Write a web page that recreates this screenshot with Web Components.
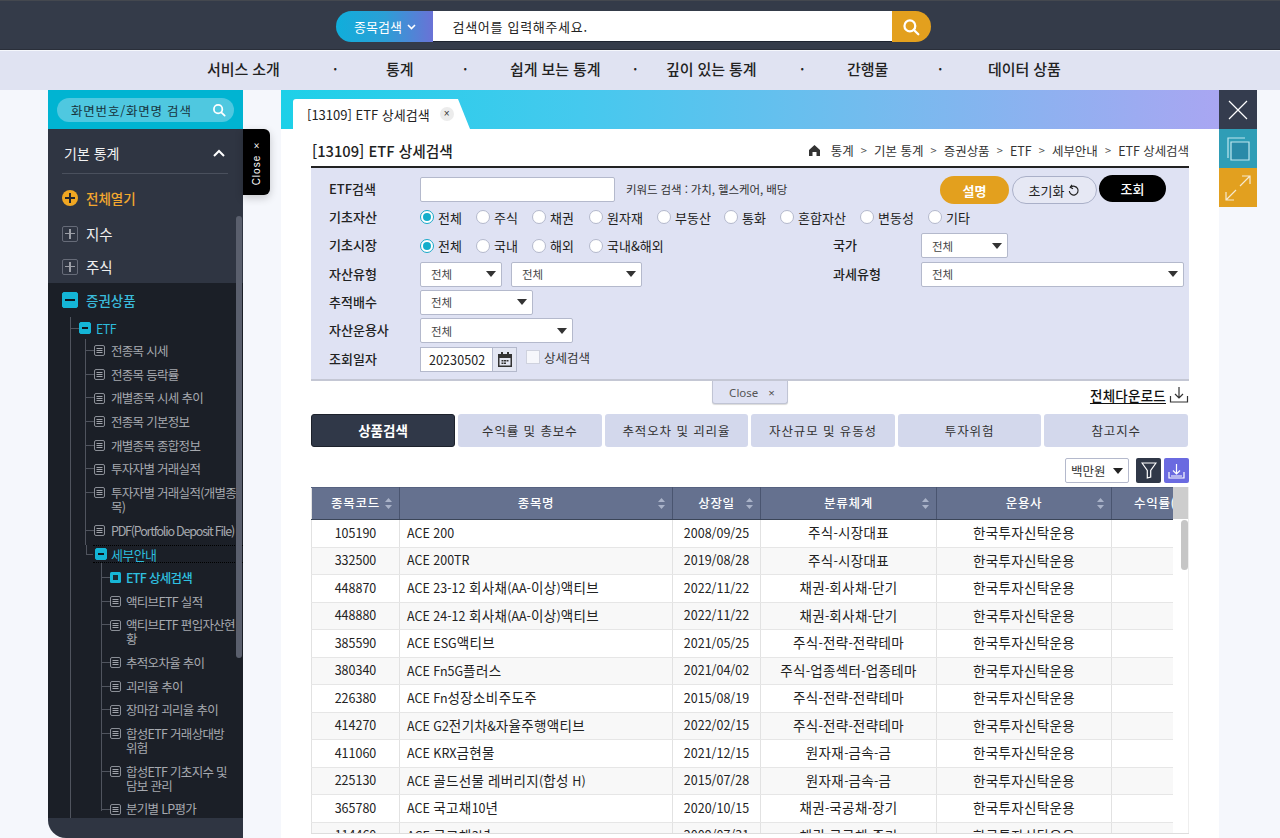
<!DOCTYPE html>
<html lang="ko"><head><meta charset="utf-8"><title>ETF 상세검색</title>
<style>
html,body{margin:0;padding:0;height:838px;overflow:hidden;background:#f5f7fc;font-family:"Noto Sans CJK KR","Noto Sans",sans-serif;font-size:13px;color:#222}
app-body{display:flex;height:748px}
</style></head><body>
<app-topbar></app-topbar>
<app-gnb></app-gnb>
<app-body>
  <app-sidebar></app-sidebar>
  <app-content>
    <tab-strip></tab-strip>
    <page-head></page-head>
    <search-form></search-form>
    <result-tabs></result-tabs>
    <data-grid></data-grid>
  </app-content>
  <side-tools></side-tools>
</app-body>
<script>
function comp(name,css,html){
  customElements.define(name,class extends HTMLElement{
    constructor(){super();const s=this.attachShadow({mode:'open'});s.innerHTML='<style>'+css+'</style>'+html;}
  });
}
const mag=(c,s=16)=>`<svg width="${s}" height="${s}" viewBox="0 0 16 16" fill="none" stroke="${c}" stroke-width="2" stroke-linecap="round"><circle cx="7" cy="7" r="4.8"/><path d="M10.600 10.600L14.500 14.500"/></svg>`;

comp('app-topbar',`:host{display:flex;justify-content:center;align-items:flex-start;height:50px;background:#343b49;border-top:1px solid #44484f;box-sizing:border-box;border-bottom:1px solid #2a2f3a}
.w{display:flex;height:31px;width:595px;margin-right:14px;margin-top:10px}
.k{width:97px;border-radius:16px 0 0 16px;background:linear-gradient(90deg,#10aedb,#2b9fd6 50%,#6a72d6);color:#fff;font-size:13px;display:flex;align-items:center;justify-content:center;gap:5px;padding-left:2px;box-sizing:border-box}
.i{flex:1;background:#fff;color:#222;font-size:13px;display:flex;align-items:center;padding-left:20px;letter-spacing:.7px;border-bottom:1px solid #1e2430;box-sizing:border-box}
.b{width:39px;background:#e3a01e;border-radius:0 16px 16px 0;display:flex;align-items:center;justify-content:center}`,
`<div class="w"><div class="k">종목검색<svg width="9" height="6" viewBox="0 0 9 6" fill="none" stroke="#fff" stroke-width="1.600"><path d="M1 1l3.500 3.500L8 1"/></svg></div><div class="i">검색어를 입력해주세요.</div><div class="b">${mag('#fff',18)}</div></div>`);

const gx=[207,333,386,463,510,633,666,800,847,938,988];
comp('app-gnb',`:host{display:flex;align-items:center;height:39px;margin-top:1px;background:#e0e3f2;padding-left:207px;font-size:15px;font-weight:500;color:#222;white-space:nowrap;padding-bottom:4px;box-sizing:border-box}
span{display:block;letter-spacing:-.1px}`,
['서비스 소개','·','통계','·','쉽게 보는 통계','·','깊이 있는 통계','·','간행물','·','데이터 상품'].map((t,i)=>`<span style="width:${gx[i+1]?gx[i+1]-gx[i]:72}px">${t}</span>`).join(''));

comp('tree-node',`:host{display:block;position:relative}
.r{display:flex;align-items:flex-start;position:relative;color:#a6a9af;font-size:12.500px;line-height:14px;letter-spacing:-.7px;padding:4.850px 0}
svg{flex:none;margin:1.500px var(--gap,5px) 0 0;display:block}
.r::before{content:"";position:absolute;left:-8px;width:8px;top:11px;border-top:1px solid #50545e}
:host([nowrap]) .r{white-space:nowrap;letter-spacing:-1.200px}
:host([active]) .r{color:#2fc0e0;font-weight:500}
.on{display:none}
:host([active]) .off{display:none}
:host([active]) .on{display:inline}
`,
`<div class="r"><svg width="11" height="11" viewBox="0 0 11 11"><g class="off"><rect x=".5" y=".5" width="10" height="10" rx="1.500" fill="#1b1f27" stroke="#8a8e96"/><path d="M2.500 3.500h6M2.500 5.500h6M2.500 7.500h6" stroke="#a0a3aa"/></g><g class="on"><rect width="11" height="11" rx="1.500" fill="#17b6d6"/><rect x="3" y="3" width="5" height="5" fill="#1b2a33"/></g></svg><span><slot></slot></span></div>`);

comp('box-toggle',`:host{display:inline-flex;flex:none;box-sizing:border-box;align-items:center;justify-content:center;border-radius:2px;width:16px;height:16px;border:1px solid #666b78;position:relative}
:host([on]){background:#14b5d6;border-color:#14b5d6}
:host([sm]){width:12px;height:12px}
i{position:absolute;background:#9b9ea6;left:2px;right:2px;top:calc(50% - 1px);height:1.500px}
b{position:absolute;background:#9b9ea6;top:2px;bottom:2px;left:calc(50% - 1px);width:1.500px}
:host([on]) i{background:#10151c;height:2px}
:host([on]) b{display:none}`,`<i></i><b></b>`);

const leaf1=['전종목 시세','전종목 등락률','개별종목 시세 추이','전종목 기본정보','개별종목 종합정보','투자자별 거래실적','투자자별 거래실적(개별종목)','PDF(Portfolio Deposit File)'];
const leaf2=['ETF 상세검색','액티브ETF 실적','액티브ETF 편입자산현황','추적오차율 추이','괴리율 추이','장마감 괴리율 추이','합성ETF 거래상대방 위험','합성ETF 기초지수 및 담보 관리','분기별 LP평가'];
comp('app-sidebar',`:host{display:flex;flex-direction:column;width:195px;margin-left:48px;flex:none;height:748px;position:relative;background:#2f3542;border-radius:0 0 0 18px;color:#fff}
.s{height:39px;background:#00b4d2;padding:8px 9px 7px;box-sizing:border-box;flex:none}
.p{height:24px;border-radius:12px;background:#4fc8e0;display:flex;align-items:center;justify-content:space-between;padding:0 8px 0 14px;font-size:12.500px;color:#17323c;letter-spacing:.8px}
.h{margin:0 15px 0 14px;height:40px;padding:4px 3px 0 2px;border-bottom:1px solid #4a505d;display:flex;align-items:center;justify-content:space-between;font-size:14px;flex:none;color:#f2f2f2}
.all{display:flex;align-items:center;gap:8px;padding:0 14px;height:47px;color:#f2a72f;font-size:13.500px;font-weight:500;flex:none}
.o{width:16px;height:16px;border-radius:50%;background:#f0a722;position:relative;flex:none;display:block}
.o::before{content:"";position:absolute;left:3px;right:3px;top:7px;height:2px;background:#23262e}
.o::after{content:"";position:absolute;top:3px;bottom:3px;left:7px;width:2px;background:#23262e}
.m{display:flex;align-items:center;gap:8px;padding:0 14px;height:33px;font-size:14.500px;color:#eee;flex:none}
.m.a{margin-top:-4px}
.tree{flex:1;min-height:0;background:#1b1f27;overflow:hidden;position:relative}
.t1{display:flex;align-items:center;gap:8px;padding:0 14px;height:34px;font-size:13.500px;color:#3abcdc;font-weight:500}
.lv1{margin:-1px 0 0 22px;border-left:1px solid #50545e;height:600px}
.t2{display:flex;align-items:center;gap:5px;margin:1px 0 0 8px;height:22px;color:#2cbcdc;font-size:12.500px;position:relative;letter-spacing:-.5px}
.t2::before{content:"";position:absolute;left:-8px;width:8px;top:11px;border-top:1px solid #50545e}
.lv2{margin-left:14px;border-left:1px solid #50545e;padding:0 3px 0 8px;height:206px;--gap:6px}
.t3{display:flex;align-items:center;gap:4px;height:18px;margin-left:22px;padding-left:2px;box-sizing:border-box;color:#2cbcdc;font-size:13px;position:relative;letter-spacing:-.6px;border-top:1px dotted #000;border-bottom:1px dotted #000}
.t3::before{content:"";position:absolute;left:-7px;width:7px;top:8px;border-top:1px solid #50545e}
.t3::after{content:"";position:absolute;left:-7px;top:-1px;height:9px;border-left:1px solid #50545e}
.lv3{margin-left:30px;border-left:1px solid #50545e;padding:3px 8px 0 8px;height:248px;box-sizing:border-box}
.foot{height:20px;flex:none}
.bar{position:absolute;left:188px;top:126px;width:6px;height:442px;background:#5a5f6d;border-radius:3px}
.close{position:absolute;left:195px;top:39px;width:27px;height:66px;background:#000;border-radius:0 6px 6px 0;box-shadow:0 3px 8px rgba(0,0,0,.2);display:flex;align-items:center;justify-content:center}
.close span{writing-mode:vertical-rl;transform:rotate(180deg);font-family:"Liberation Sans",sans-serif;font-size:10px;letter-spacing:1px;color:#fff;white-space:nowrap}`,
`<div class="s"><div class="p"><span>화면번호/화면명 검색</span>${mag('#fff',14)}</div></div>
<div class="h"><span>기본 통계</span><svg width="12" height="8" viewBox="0 0 12 8" fill="none" stroke="#fff" stroke-width="2"><path d="M1 7l5-5 5 5"/></svg></div>
<div class="all"><i class="o"></i>전체열기</div>
<div class="m a"><box-toggle></box-toggle>지수</div>
<div class="m"><box-toggle></box-toggle>주식</div>
<div class="tree">
 <div class="t1"><box-toggle on></box-toggle>증권상품</div>
 <div class="lv1">
  <div class="t2"><box-toggle on sm></box-toggle>ETF</div>
  <div class="lv2">${leaf1.map((x,i)=>`<tree-node ${i==7?'nowrap':''}>${x}</tree-node>`).join('')}</div>
  <div class="t3"><box-toggle on sm></box-toggle>세부안내</div>
  <div class="lv3">${leaf2.map((x,i)=>`<tree-node ${i==0?'active':''}>${x}</tree-node>`).join('')}</div>
 </div>
</div>
<div class="foot"></div>
<div class="bar"></div>
<div class="close"><span>Close ×</span></div>`);

comp('app-content',`:host{display:flex;flex-direction:column;width:938px;margin-left:38px;flex:none;background:#fff;height:748px;overflow:hidden}`,`<slot></slot>`);

comp('tab-strip',`:host{display:flex;align-items:flex-end;height:39px;background:linear-gradient(90deg,#1dd0e8,#45c9ee 32%,#72bcee 62%,#a9a6f2);padding-left:12px;flex:none}
.t{width:177px;height:30px;background:#fff;clip-path:polygon(0 0,165px 0,177px 100%,0 100%);display:flex;align-items:center;padding-left:14px;box-sizing:border-box;font-size:13px;gap:10px;border-radius:3px 0 0 0;color:#222}
.x{width:14px;height:14px;border-radius:50%;background:#ececec;font-size:10px;line-height:14px;text-align:center;font-family:"Liberation Sans",sans-serif;color:#333;margin-top:-1px}`,
`<div class="t"><span>[13109] ETF 상세검색</span><span class="x">×</span></div>`);

comp('page-head',`:host{display:flex;align-items:center;justify-content:space-between;margin:0 30px;height:39px;box-sizing:border-box;padding:5px 0 0 1px;border-bottom:2px solid #222;flex:none}
h1{margin:0;font-size:14.700px;font-weight:500;color:#222}
.b{display:flex;align-items:center;font-size:12.500px;color:#333;letter-spacing:-.05px;white-space:nowrap}
.b i{font-style:normal;width:20.400px;text-align:center;font-size:11px;color:#555}
svg{margin-right:11px}`,
`<h1>[13109] ETF 상세검색</h1><div class="b"><svg width="11" height="11" viewBox="0 0 11 11" fill="#333"><path d="M5.500 0L11 5v6H7.500V7h-4v4H0V5z"/></svg><span>통계</span><i>&gt;</i><span>기본 통계</span><i>&gt;</i><span>증권상품</span><i>&gt;</i><span>ETF</span><i>&gt;</i><span>세부안내</span><i>&gt;</i><span>ETF 상세검색</span></div>`);

comp('form-select',`:host{display:inline-flex;align-items:center;justify-content:space-between;height:25px;background:#fff;border:1px solid #b4b9cc;border-radius:2px;box-sizing:border-box;padding:0 5px 0 10px;font-size:11.500px;color:#444;flex:none}
i{width:0;height:0;border-left:5px solid transparent;border-right:5px solid transparent;border-top:6px solid #333}`,
`<slot></slot><i></i>`);

comp('form-radio',`:host{display:inline-flex;align-items:center;gap:4px;font-size:13px;color:#222;white-space:nowrap;flex:none}
i{width:14px;height:14px;border-radius:50%;background:#fff;border:1px solid #b4b9cc;box-sizing:border-box;display:block;position:relative}
:host([on]) i{border-color:#18a8c8}
:host([on]) i::after{content:"";position:absolute;inset:2px;border-radius:50%;background:#14aecb}`,
`<i></i><span><slot></slot></span>`);

comp('pill-btn',`:host{display:inline-flex;align-items:center;justify-content:center;box-sizing:border-box;border-radius:14px;font-size:13px;height:28px;flex:none;font-weight:500;gap:3px}
:host([k=o]){background:#e3a01e;color:#fff;width:69px;font-weight:700}
:host([k=l]){background:#e6e8f4;color:#222;width:85px;border:1px solid #aab0c8;font-weight:400}
:host([k=b]){background:#000;color:#fff;width:67px;height:27px;margin:-3px 0 0 -1px}`,`<slot></slot>`);

const rad=(arr,last)=>arr.map((r,i,a)=>`<div style="width:${a[i+1]?a[i+1][1]-r[1]:last}px;flex:none;display:flex"><form-radio ${r[2]?'on':''}>${r[0]}</form-radio></div>`).join('');
comp('search-form',`:host{display:block;position:relative;margin:0 30px;background:#dfe2f3;border-bottom:2px solid #c4c7d4;padding:7px 5px 0 18px;flex:none;height:213px;box-sizing:border-box}
.g{display:grid;grid-template-columns:91px 413px 88px 1fr;grid-auto-rows:28.330px;align-items:center}
label{font-size:13px;font-weight:500;color:#222;margin-top:-2px}
.f{display:flex;align-items:center}
.sp{grid-column:2 / 5}
.h{font-size:11.500px;color:#333;margin-left:11px;letter-spacing:-.1px}
.btns{display:flex;gap:3px;margin-left:auto;margin-right:18px;align-items:center;padding-top:2px}
.in{width:195px;height:25px;background:#fff;border:1px solid #b4b9cc;border-radius:2px;box-sizing:border-box}
.d{width:73px;height:25px;background:#fff;border:1px solid #b4b9cc;box-sizing:border-box;font-size:12.500px;display:flex;align-items:center;padding-left:8px;letter-spacing:.1px}
.c{width:24px;height:25px;background:#e4e7f3;border:1px solid #b4b9cc;border-left:0;box-sizing:border-box;display:flex;align-items:center;justify-content:center}
.cb{width:14px;height:14px;background:#f6f7fb;border:1px solid #cfd2de;box-sizing:border-box;margin:0 4px 0 9px}
.cl{font-size:12.500px;margin-top:-4px;display:flex;align-items:center;color:#333}
.close{position:absolute;left:401px;top:213px;width:76px;height:23px;background:#dfe2f3;border:1px solid #c0c4d4;border-top:0;border-radius:0 0 3px 3px;box-sizing:border-box;font-family:"Noto Sans",sans-serif;font-size:11.500px;color:#555;display:flex;align-items:center;justify-content:center;gap:10px;padding-left:4px;box-shadow:0 1px 1px rgba(0,0,0,.15);z-index:1}
.dl{position:absolute;right:0;top:217px;display:flex;align-items:center;gap:3px;font-size:13.500px;font-weight:500;color:#111}
.dl span{text-decoration:underline;text-underline-offset:2px;letter-spacing:.25px}`,
`<div class="g">
<label>ETF검색</label><div class="f sp"><div class="in"></div><span class="h">키워드 검색 : 가치, 헬스케어, 배당</span><div class="btns"><pill-btn k="o">설명</pill-btn><pill-btn k="l">초기화<svg width="13" height="13" viewBox="0 0 13 13" fill="none" stroke="#222" stroke-width="1.200"><path d="M3.800 3.300A4.400 4.400 0 1 1 2.300 7"/><path d="M5 .8L3.200 3.300 6 4.800"/></svg></pill-btn><pill-btn k="b">조회</pill-btn></div></div>
<label>기초자산</label><div class="f sp">${rad([['전체',420,1],['주식',476],['채권',532],['원자재',589],['부동산',657],['통화',724],['혼합자산',780],['변동성',860],['기타',928]],60)}</div>
<label>기초시장</label><div class="f">${rad([['전체',420,1],['국내',476],['해외',532],['국내&amp;해외',589]],100)}</div><label>국가</label><div class="f"><form-select style="width:87px">전체</form-select></div>
<label>자산유형</label><div class="f" style="gap:9px"><form-select style="width:82px">전체</form-select><form-select style="width:131px">전체</form-select></div><label>과세유형</label><div class="f"><form-select style="width:263px">전체</form-select></div>
<label>추적배수</label><div class="f sp"><form-select style="width:113px">전체</form-select></div>
<label>자산운용사</label><div class="f sp"><form-select style="width:153px">전체</form-select></div>
<label>조회일자</label><div class="f sp"><div class="d">20230502</div><div class="c"><svg width="14" height="15" viewBox="0 0 14 15" fill="#333"><path d="M3 0h2v2h4V0h2v2h3v13H0V2h3zM1.500 6v7.500h11V6zM3.500 8h2v1.500h-2zm2.500 0h2v1.500H6zm2.500 0h2v1.500h-2zm-5 2.500h2V12h-2zm2.500 0h2V12H6z"/></svg></div><div class="cl"><i class="cb"></i>상세검색</div></div>
</div>
<div class="close"><span>Close</span><span>×</span></div>
<div class="dl"><span>전체다운로드</span><svg width="20" height="18" viewBox="0 0 20 18" fill="none" stroke="#333" stroke-width="1.200"><path d="M1.500 10v6h17v-6M10 1v11M6 8l4 4 4-4"/></svg></div>`);

comp('result-tabs',`:host{display:grid;grid-template-columns:144px repeat(5,1fr);gap:3px;margin:33px 31px 0 30px;height:33px;flex:none}
div{display:flex;align-items:center;justify-content:center;background:#d3d8ec;border-radius:3px;font-size:12.500px;color:#333;letter-spacing:.9px;padding-bottom:1px;box-sizing:border-box}
.a{background:#303848;color:#fff;font-weight:700;letter-spacing:0;border:1px solid #1d222c;font-size:13.500px}`,
`<div class="a">상품검색</div><div>수익률 및 총보수</div><div>추적오차 및 괴리율</div><div>자산규모 및 유동성</div><div>투자위험</div><div>참고지수</div>`);

const rows=[['105190','ACE 200','2008/09/25','주식-시장대표'],['332500','ACE 200TR','2019/08/28','주식-시장대표'],['448870','ACE 23-12 회사채(AA-이상)액티브','2022/11/22','채권-회사채-단기'],['448880','ACE 24-12 회사채(AA-이상)액티브','2022/11/22','채권-회사채-단기'],['385590','ACE ESG액티브','2021/05/25','주식-전략-전략테마'],['380340','ACE Fn5G플러스','2021/04/02','주식-업종섹터-업종테마'],['226380','ACE Fn성장소비주도주','2015/08/19','주식-전략-전략테마'],['414270','ACE G2전기차&amp;자율주행액티브','2022/02/15','주식-전략-전략테마'],['411060','ACE KRX금현물','2021/12/15','원자재-금속-금'],['225130','ACE 골드선물 레버리지(합성 H)','2015/07/28','원자재-금속-금'],['365780','ACE 국고채10년','2020/10/15','채권-국공채-장기'],['114460','ACE 국고채3년','2009/07/31','채권-국공채-중기']];
const ko=s=>s.replace(/[가-힣]+/g,m=>`<b>${m}</b>`);
const sort=`<svg class="so" width="7" height="11" viewBox="0 0 7 11" fill="#a9b2c8"><path d="M3.500 0L7 4H0zM3.500 11L0 7h7z"/></svg>`;
comp('data-grid',`:host{display:block;margin:11px 30px 0;position:relative;flex:none}
.tb{display:flex;justify-content:flex-end;align-items:center;height:25px;gap:3px;margin-bottom:4px}
.u{width:64px;height:25px;background:#fff;border:1px solid #b4b9cc;border-radius:2px;box-sizing:border-box;display:flex;align-items:center;justify-content:space-between;padding:0 5px;font-size:12.500px;color:#333;margin-right:4px}
.u i{width:0;height:0;border-left:5px solid transparent;border-right:5px solid transparent;border-top:6px solid #222}
.ib{width:25px;height:25px;border-radius:2px;display:flex;align-items:center;justify-content:center;box-sizing:border-box}
.wrap{position:relative;height:347px;overflow:hidden;border-bottom:1px solid #ddd;box-sizing:border-box;display:flex}
.sc{flex:1;min-width:0;overflow:hidden}
table{border-collapse:collapse;table-layout:fixed;width:862px;font-size:12.500px;color:#222}
th{height:32px;background:#65718f;color:#fff;font-weight:500;padding:0 0 2px;border-right:1px solid #4a5570;border-top:1px solid #566280;border-bottom:1px solid #3b4558;position:relative;letter-spacing:.7px;box-sizing:border-box;text-align:center;font-size:12.500px;overflow:hidden;white-space:nowrap}
th .so{position:absolute;right:7px;top:10px}
th.l{text-align:left;padding-left:22px;border-right:0}
td{height:27.500px;padding:0 0 2px;border-right:1px solid #e2e2e2;border-bottom:1px solid #e6e6e6;text-align:center;box-sizing:border-box;white-space:nowrap;overflow:hidden}
td b{font-weight:400;font-size:13.500px;letter-spacing:.35px}
td:nth-child(2){text-align:left;padding-left:7px}
tr:nth-child(even) td{background:#f8f8f8}
td:first-child,th:first-child{border-left:1px solid #e2e2e2}
.v{width:16px;flex:none;background:#fff;position:relative;border-right:1px solid #eee;box-sizing:border-box}
.v .c{height:32px;background:#cdcdcd}
.v .t{position:absolute;left:8px;top:33px;width:7px;height:50px;background:#c6c6c6;border-radius:4px}`,
`<div class="tb"><div class="u">백만원<i></i></div>
<div class="ib" style="background:#303848"><svg width="16" height="17" viewBox="0 0 16 17" fill="none" stroke="#fff" stroke-width="1.200"><path d="M1 1h14L9.700 8.500V15L6.300 16V8.500z"/></svg></div>
<div class="ib" style="background:#6a6ae0"><svg width="17" height="16" viewBox="0 0 17 16" fill="none" stroke="#fff" stroke-width="1.200"><path d="M1 9v6h15V9M8.500 1v10M5 7.500l3.500 3.500L12 7.500M3 13h11"/></svg></div></div>
<div class="wrap"><div class="sc"><table><colgroup><col style="width:88px"><col style="width:273px"><col style="width:88px"><col style="width:176px"><col style="width:175px"><col style="width:62px"></colgroup>
<thead><tr><th>종목코드 ${sort}</th><th>종목명${sort}</th><th>상장일${sort}</th><th>분류체계${sort}</th><th>운용사${sort}</th><th class="l">수익률(</th></tr></thead>
<tbody>${rows.map(r=>`<tr><td>${r[0]}</td><td>${ko(r[1])}</td><td>${r[2]}</td><td>${ko(r[3])}</td><td>${ko('한국투자신탁운용')}</td><td></td></tr>`).join('')}</tbody></table></div>
<div class="v"><div class="c"></div><div class="t"></div></div></div>`);

comp('side-tools',`:host{display:flex;flex-direction:column;width:38px;flex:none}
div{height:39px;display:flex;align-items:center;justify-content:center}`,
`<div style="background:#343c4e"><svg width="20" height="20" viewBox="0 0 20 20" stroke="#fff" stroke-width="1.200"><path d="M1 1l18 18M19 1L1 19"/></svg></div>
<div style="background:#2f9db6"><svg width="23" height="24" viewBox="0 0 23 24" fill="none" stroke="#bfe6ee" stroke-width="1.200"><path d="M1 21V1h17"/><path d="M4 5h18v18H4z" fill="#2a8aa8"/></svg></div>
<div style="background:#e2a01f"><svg width="26" height="26" viewBox="0 0 26 26" fill="none" stroke="#f6ead0" stroke-width="1.200"><path d="M15 11L25 1M17 1h8v8M11 15L1 25M1 17v8h8"/></svg></div>`);
</script>
</body></html>
